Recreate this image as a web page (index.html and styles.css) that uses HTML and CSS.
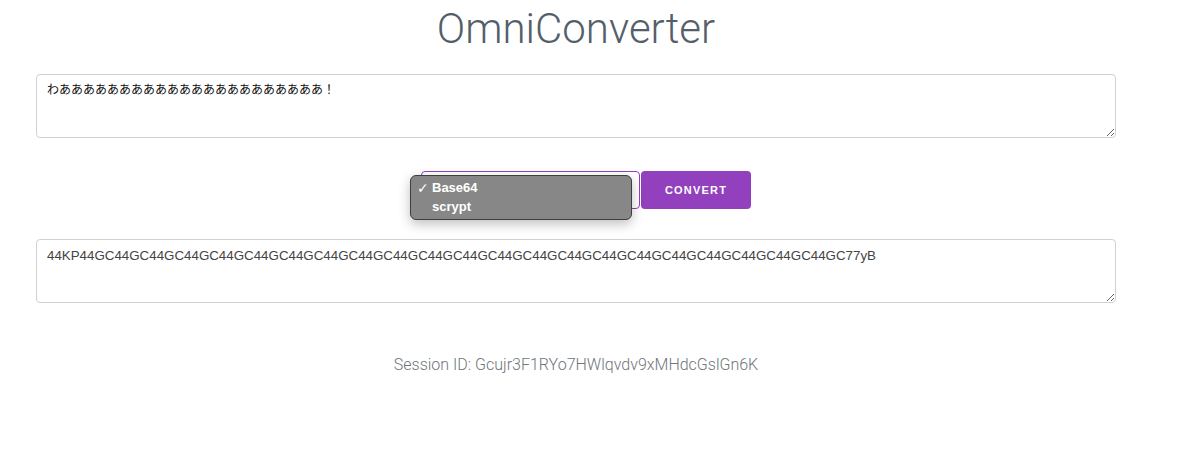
FILE: index.html
```html
<!DOCTYPE html>
<html lang="ja">
<head>
<meta charset="utf-8">
<title>OmniConverter</title>
<link rel="stylesheet" href="styles.css">
</head>
<body>
<main class="page">
  <h1 class="title">OmniConverter</h1>
  <textarea class="field input">わああああああああああああああああああああああ！</textarea>
  <div class="controls">
    <div class="select-wrap">
      <select class="algo">
        <option>Base64</option>
        <option>scrypt</option>
      </select>
      <div class="popup">
        <div class="opt"><span class="check">✓</span>Base64</div>
        <div class="opt"><span class="check"></span>scrypt</div>
      </div>
    </div>
    <button class="convert">Convert</button>
  </div>
  <textarea class="field output">44KP44GC44GC44GC44GC44GC44GC44GC44GC44GC44GC44GC44GC44GC44GC44GC44GC44GC44GC44GC44GC44GC44GC77yB</textarea>
  <p class="session">Session ID: Gcujr3F1RYo7HWlqvdv9xMHdcGslGn6K</p>
</main>
</body>
</html>
```

FILE: styles.css
```css
html, body {
  margin: 0;
  padding: 0;
  background: #fff;
}
.page {
  display: flex;
  flex-direction: column;
  align-items: center;
  padding-right: 30px;
  font-family: "Liberation Sans", Arial, sans-serif;
}
.title {
  margin: 0;
  padding-top: 4px;
  font-family: Roboto, "Liberation Sans", sans-serif;
  font-weight: 300;
  font-size: 42px;
  line-height: 50px;
  color: #555f69;
  letter-spacing: 0;
}
.field {
  box-sizing: border-box;
  width: 1080px;
  height: 64px;
  margin: 0;
  padding: 6px 10px;
  border: 1px solid #d1d1d1;
  border-radius: 4px;
  background: #fff;
  resize: vertical;
  outline: none;
}
.input {
  margin-top: 20px;
  font-family: "Noto Sans CJK JP", sans-serif;
  font-size: 12px;
  line-height: 16px;
  color: #111;
}
.output {
  margin-top: 30px;
  padding-top: 8px;
  font-family: "Liberation Sans", Arial, sans-serif;
  font-size: 13.33px;
  line-height: 16px;
  color: #444;
}
.controls {
  display: flex;
  margin-top: 33px;
  padding-left: 20px;
}
.select-wrap {
  position: relative;
}
.algo {
  box-sizing: border-box;
  width: 219px;
  height: 38px;
  border: 1px solid #9240bd;
  border-radius: 4px;
  background: #fff;
  appearance: none;
  -webkit-appearance: none;
  font-size: 13px;
  color: #fff;
  padding: 0 10px;
}
.popup {
  position: absolute;
  left: -11px;
  top: 4px;
  box-sizing: border-box;
  width: 222px;
  height: 45px;
  padding: 2px 0 0 6px;
  background: #878787;
  border: 1px solid #3e3e3e;
  border-radius: 6px;
  box-shadow: 0 4px 12px rgba(0, 0, 0, 0.25);
  font-family: "Liberation Sans", Arial, sans-serif;
  font-weight: bold;
  font-size: 13px;
  color: #fff;
}
.opt {
  display: flex;
  align-items: center;
  height: 19px;
}
.check {
  display: inline-block;
  width: 15px;
  font-weight: bold;
  font-family: "DejaVu Sans", sans-serif;
  font-size: 14px;
}
.convert {
  box-sizing: border-box;
  height: 38px;
  width: 110px;
  margin-left: 1px;
  border: none;
  border-radius: 4px;
  background: #9240bd;
  color: #fff;
  font-family: "Liberation Sans", Arial, sans-serif;
  font-weight: bold;
  font-size: 11px;
  letter-spacing: 1.2px;
  text-transform: uppercase;
  padding: 0;
}
.session {
  margin: 50px 0 0 0;
  font-family: Roboto, "Liberation Sans", sans-serif;
  font-weight: 300;
  font-size: 16px;
  line-height: 24px;
  color: #6f757b;
}
```
